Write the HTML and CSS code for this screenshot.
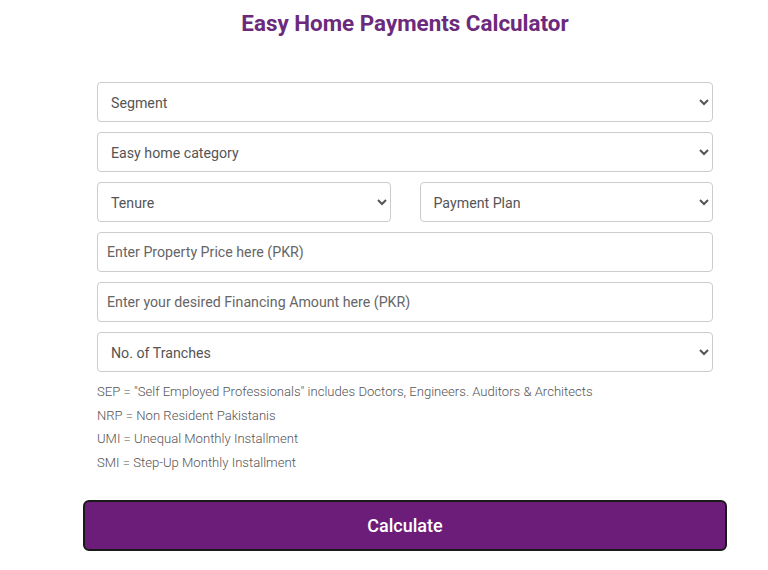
FILE: index.html
```html
<!DOCTYPE html>
<html>
<head>
    <title>Easy Home Payments Calculator</title>
    <link rel="stylesheet" href="styles.css">
</head>
<body>
    <div class="wrap">
        <h2 class="title">Easy Home Payments Calculator</h2>
        <form id="calcForm" class="fields">
            <select class="field sel">
                <option>Segment</option>
            </select>
            <select class="field sel">
                <option>Easy home category</option>
            </select>
            <div class="row">
                <select class="field sel">
                    <option>Tenure</option>
                </select>
                <select class="field sel">
                    <option>Payment Plan</option>
                </select>
            </div>
            <input type="text" class="field txt" placeholder="Enter Property Price here (PKR)">
            <input type="text" class="field txt" placeholder="Enter your desired Financing Amount here (PKR)">
            <select class="field sel">
                <option>No. of Tranches</option>
            </select>
            <div class="notes">
                <p>SEP = "Self Employed Professionals" includes Doctors, Engineers. Auditors &amp; Architects</p>
                <p>NRP = Non Resident Pakistanis</p>
                <p>UMI = Unequal Monthly Installment</p>
                <p>SMI = Step-Up Monthly Installment</p>
            </div>
        </form>
        <button type="button" class="calc">Calculate</button>
    </div>
</body>
</html>
```
FILE: styles.css
```css
body { margin: 0; font-family: Roboto, "Liberation Sans", sans-serif; background: #fff; }
.wrap { width: 644px; margin-left: 83px; }
.title { margin: 0; padding-top: 10px; height: 82px; box-sizing: border-box; text-align: center; color: #6c2a7c; font-size: 22.4px; font-weight: 700; }
.fields { padding: 0 14px; display: flex; flex-direction: column; gap: 10px; }
.row { display: flex; gap: 29px; }
.row .field { flex: 1; min-width: 0; }
.field { height: 40px; width: 100%; box-sizing: border-box; border: 1px solid #ccc; border-radius: 4px; background: #fff; font-family: Roboto, "Liberation Sans", sans-serif; font-size: 14.2px; color: #555; }
.sel { padding: 2px 8px 0 9px; }
.txt { padding: 0 9px; }
.txt::placeholder { color: #666; }
.notes { font-size: 13.1px; font-weight: 300; color: #555; line-height: 23.5px; margin-top: -2px; }
.notes p { margin: 0; }
.calc { display: block; width: 100%; height: 51px; margin-top: 26px; background: #6c1d7a; color: #fff; border: 2px solid #1a1a1a; border-radius: 6px; font-family: Roboto, "Liberation Sans", sans-serif; font-size: 18px; font-weight: 500; cursor: pointer; }
```
